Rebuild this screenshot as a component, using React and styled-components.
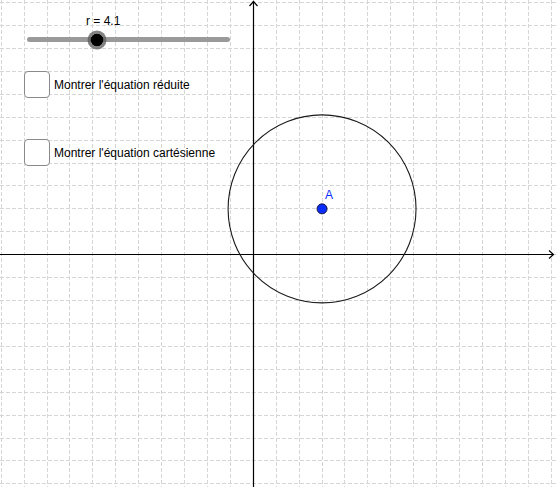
import React, { useState } from 'react';
import styled, { createGlobalStyle } from 'styled-components';

const GlobalStyle = createGlobalStyle`
    html, body {
        margin: 0;
        padding: 0;
        background: #ffffff;
    }
    body {
        font-family: "Liberation Sans", Arial, sans-serif;
    }
`

// graph coordinates
const W = 556;
const H = 487;
const OX = 253.3;
const OY = 254.7;
const UNIT = 22.92;

const toX = (x) => OX + x * UNIT;
const toY = (y) => OY - y * UNIT;
const crisp = (v) => Math.floor(v) + 0.5;

const gridXs = [];
for (let k = -11; k <= 13; k++) gridXs.push(crisp(toX(k)));
const gridYs = [];
for (let k = -10; k <= 11; k++) gridYs.push(crisp(toY(k)));

const Graph = ({ r }) => {
    const ax = toX(3);
    const ay = toY(2);
    const ox = crisp(OX);
    const oy = crisp(OY);
    return (
        <GraphSvg width={W} height={H} viewBox={`0 0 ${W} ${H}`}>
            <g stroke="#d6d6d6" strokeWidth="1" strokeDasharray="4 2">
                {gridXs.map((x) => (
                    <line key={'v' + x} x1={x} y1={0} x2={x} y2={H} />
                ))}
                {gridYs.map((y) => (
                    <line key={'h' + y} x1={0} y1={y} x2={W} y2={y} />
                ))}
            </g>
            <g stroke="#000" strokeWidth="1.2" fill="none">
                <line x1={0} y1={oy} x2={W - 2} y2={oy} />
                <line x1={ox} y1={1} x2={ox} y2={H} />
                <polyline points={`${W - 7},${oy - 4} ${W - 2.5},${oy} ${W - 7},${oy + 4}`} />
                <polyline points={`${ox - 4},${6} ${ox},${1.5} ${ox + 4},${6}`} />
            </g>
            <circle cx={ax} cy={ay} r={r * UNIT} fill="none" stroke="#1a1a1a" strokeWidth="1.1" />
            <circle cx={ax} cy={ay} r="5" fill="#0a2cff" stroke="#1a1a40" strokeWidth="1" />
            <PointLabel x={ax + 3} y={ay - 10}>A</PointLabel>
        </GraphSvg>
    )
}

const Slider = ({ value, min, max }) => {
    const pct = (value - min) / (max - min);
    return (
        <SliderBlock>
            <SliderLabel>r = {value}</SliderLabel>
            <Track>
                <Knob style={{ left: pct * 100 + '%' }} />
            </Track>
        </SliderBlock>
    )
}

const CheckRow = ({ label, checked, onToggle, top }) => (
    <Row top={top} onClick={onToggle}>
        <Box checked={checked}>{checked ? '✓' : ''}</Box>
        <RowLabel>{label}</RowLabel>
    </Row>
)

const App = () => {
    const [reduite, setReduite] = useState(false);
    const [cartesienne, setCartesienne] = useState(false);
    const r = 4.1;

    return (
        <>
            <GlobalStyle />
            <Canvas>
                <Graph r={r} />
                <Controls>
                    <Slider value={r} min={1} max={10} />
                    <CheckRow
                        top={29}
                        label="Montrer l'équation réduite"
                        checked={reduite}
                        onToggle={() => setReduite(!reduite)}
                    />
                    <CheckRow
                        top={41}
                        label="Montrer l'équation cartésienne"
                        checked={cartesienne}
                        onToggle={() => setCartesienne(!cartesienne)}
                    />
                </Controls>
            </Canvas>
        </>
    )
}

export default App;

const Canvas = styled.div`
    position: relative;
    width: ${W}px;
    height: ${H}px;
    overflow: hidden;
    background: #ffffff;
`

const GraphSvg = styled.svg`
    display: block;
`

const PointLabel = styled.text`
    fill: #0a2cff;
    font-family: "Liberation Sans", Arial, sans-serif;
    font-size: 12px;
`

const Controls = styled.div`
    position: absolute;
    left: 0;
    top: 0;
    display: flex;
    flex-direction: column;
    align-items: flex-start;
    padding-left: 24px;
`

const SliderBlock = styled.div`
    display: flex;
    flex-direction: column;
    padding-top: 14px;
    padding-left: 3px;
`

const SliderLabel = styled.div`
    font-size: 12px;
    line-height: 14px;
    color: #000;
    margin-left: 59px;
`

const Track = styled.div`
    position: relative;
    width: 203px;
    height: 5px;
    margin-top: 9px;
    border-radius: 3px;
    background: #9a9a9a;
`

const Knob = styled.div`
    position: absolute;
    top: 50%;
    width: 13px;
    height: 13px;
    border-radius: 50%;
    background: #000;
    border: 3px solid rgba(90, 90, 90, 0.75);
    background-clip: padding-box;
    transform: translate(-50%, -50%);
`

const Row = styled.div`
    display: flex;
    align-items: center;
    gap: 4px;
    margin-top: ${props => props.top}px;
    cursor: pointer;
`

const Box = styled.span`
    box-sizing: border-box;
    width: 26px;
    height: 27px;
    border: 1.5px solid #8a8a8a;
    border-radius: 4px;
    background: #ffffff;
    display: flex;
    align-items: center;
    justify-content: center;
    font-size: 16px;
    color: ${props => props.checked ? '#333' : 'transparent'};
`

const RowLabel = styled.span`
    font-size: 12px;
    line-height: 14px;
    color: #000;
    margin-top: 1px;
`
